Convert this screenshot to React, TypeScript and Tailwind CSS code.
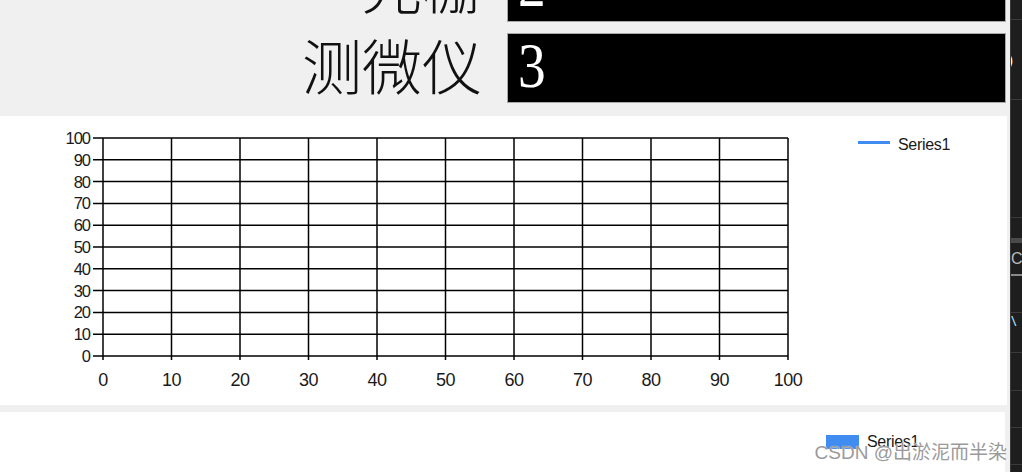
import React from 'react';

const yTicks = [100, 90, 80, 70, 60, 50, 40, 30, 20, 10, 0];
const xTicks = [0, 10, 20, 30, 40, 50, 60, 70, 80, 90, 100];

// plot area inside the chart panel
const left = 103;
const right = 788;
const top = 22;
const bottom = 240;

function Plot() {
    const xs = xTicks.map((v) => left + ((right - left) * v) / 100);
    const ys = yTicks.map((v) => bottom - ((bottom - top) * v) / 100);
    return (
        <svg width="820" height="289" className="shrink-0" style={{ fontFamily: '"Liberation Sans", Arial, sans-serif' }}>
            <g stroke="#000" strokeWidth="1.5">
                {ys.map((y, i) => (
                    <line key={'h' + i} x1={93} x2={right} y1={y} y2={y} />
                ))}
                {xs.map((x, i) => (
                    <line key={'v' + i} x1={x} x2={x} y1={top} y2={bottom + 4} />
                ))}
            </g>
            {ys.map((y, i) => (
                <text key={'yl' + i} x={90} y={y + 6} textAnchor="end" fontSize="16.5" fill="#1a1a1a" letterSpacing="-1">
                    {yTicks[i]}
                </text>
            ))}
            {xs.map((x, i) => (
                <text key={'xl' + i} x={x} y={270} textAnchor="middle" fontSize="18" fill="#1a1a1a" letterSpacing="-0.5">
                    {xTicks[i]}
                </text>
            ))}
        </svg>
    );
}

function Row({ label, value }: { label: string; value: string }) {
    return (
        <div className="h-[70px] flex items-center shrink-0">
            <div
                className="w-[484px] text-right text-[60px] leading-none font-light text-[#111] pr-[2px] pb-[9px]"
                style={{ fontFamily: '"Noto Sans CJK SC", "Noto Sans", sans-serif' }}
            >
                {label}
            </div>
            <div className="ml-[23px] w-[499px] h-[70px] bg-black border border-[#a8a8a8] flex items-center pl-[10px]">
                <span
                    className="text-white text-[63px] leading-none -mt-[3px] inline-block scale-x-[0.88] origin-left"
                    style={{ fontFamily: '"Liberation Serif", "Times New Roman", serif' }}
                >
                    {value}
                </span>
            </div>
        </div>
    );
}

export default function App() {
    return (
        <div className="w-[1022px] h-[472px] flex bg-[#f0f0f0] overflow-hidden">
            <div className="w-[1010px] flex flex-col shrink-0">
                {/* readout rows, the first one is scrolled out of view */}
                <div className="h-[116px] shrink-0 overflow-hidden flex flex-col justify-end gap-[11px] pb-[13px]">
                    <Row label="光栅" value="2" />
                    <Row label="测微仪" value="3" />
                </div>

                <div className="w-[1007px] h-[289px] bg-white flex shrink-0">
                    <Plot />
                    <div
                        className="flex items-start gap-[8px] pt-[17px] ml-[38px] text-[16px] text-[#1a1a1a]"
                        style={{ fontFamily: '"Liberation Sans", Arial, sans-serif' }}
                    >
                        <span className="w-[32px] h-[3px] bg-[#418cf0] mt-[8px]" />
                        <span className="tracking-[-0.3px]">Series1</span>
                    </div>
                </div>

                <div className="h-[7px] shrink-0" />

                <div className="w-[1005px] h-[60px] bg-white relative shrink-0">
                    <div
                        className="flex items-center gap-[8px] pl-[826px] pt-[18px] text-[16px] text-[#1a1a1a]"
                        style={{ fontFamily: '"Liberation Sans", Arial, sans-serif' }}
                    >
                        <span className="w-[33px] h-[14px] bg-[#418cf0]" />
                        <span className="tracking-[-0.3px]">Series1</span>
                    </div>
                    <div
                        className="absolute right-[-2px] top-[31px] text-[19px] leading-none text-[#9a9a9a]"
                        style={{ fontFamily: '"Liberation Sans", "Noto Sans CJK SC", sans-serif', textShadow: '0 0 1px #fff' }}
                    >
                        CSDN @出淤泥而半染
                    </div>
                </div>
            </div>

            {/* edge of the neighbouring dark window */}
            <div className="flex-1 bg-[#1e1e1e] border-l border-[#3a3a3a] flex flex-col overflow-hidden text-[#c8c8c8]">
                <div className="h-[20px] border-b border-[#3a3a3a] shrink-0" />
                <div className="h-[80px] border-b border-[#3a3a3a] shrink-0 flex items-center">
                    <span className="text-[14px] font-bold text-white leading-none -ml-[3px]">)</span>
                </div>
                <div className="h-[118px] border-b border-[#3a3a3a] shrink-0" />
                <div className="h-[20px] shrink-0" />
                <div className="h-[5px] bg-[#4a4a4a] shrink-0" />
                <div className="h-[33px] border-b-2 border-[#8a8a8a] shrink-0 flex items-center">
                    <span className="text-[16px] leading-none text-[#bbb]" style={{ fontFamily: '"Liberation Sans", sans-serif' }}>C</span>
                </div>
                <div className="h-[37px] border-b border-[#3a3a3a] shrink-0" />
                <div className="h-[40px] border-b border-[#3a3a3a] shrink-0 flex items-start">
                    <span className="text-[15px] leading-none text-[#9cdcfe]">\</span>
                </div>
                <div className="h-[38px] border-b border-[#3a3a3a] shrink-0" />
                <div className="h-[37px] border-b border-[#3a3a3a] shrink-0" />
                <div className="h-[37px] border-b border-[#3a3a3a] shrink-0" />
            </div>
        </div>
    );
}
